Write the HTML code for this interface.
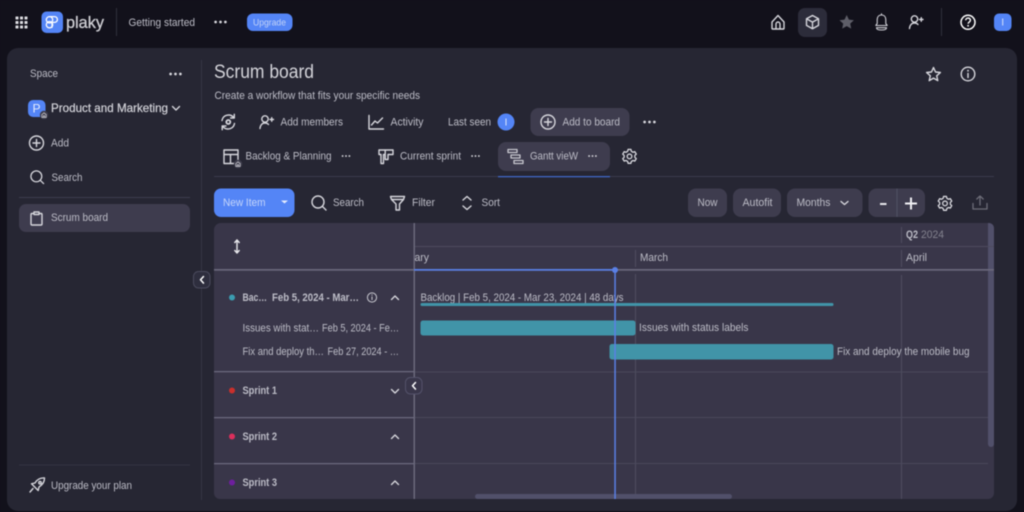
<!DOCTYPE html>
<html><head><meta charset="utf-8"><title>Scrum board</title>
<style>
html,body{margin:0;padding:0;background:#12111b;width:1024px;height:512px;overflow:hidden}
svg{display:block;filter:blur(.4px)}
text{font-family:"Liberation Sans",sans-serif;font-size:11px;fill:#bdbdc7}
.b{font-weight:bold;font-size:11px}
.i{fill:none;stroke:#d6d6dc;stroke-width:1.4;stroke-linecap:round;stroke-linejoin:round}
.g{fill:none;stroke:#c8c8d0;stroke-width:1.3;stroke-linecap:round;stroke-linejoin:round}
</style></head><body>
<svg width="1024" height="512" viewBox="0 0 1024 512" xmlns="http://www.w3.org/2000/svg">
<defs>
<symbol id="dots" viewBox="0 0 13 4" overflow="visible"><circle cx="1.6" cy="2" r="1.35" fill="#d8d8de"/><circle cx="6.5" cy="2" r="1.35" fill="#d8d8de"/><circle cx="11.4" cy="2" r="1.35" fill="#d8d8de"/></symbol>
<symbol id="gear" viewBox="0 0 16 16" overflow="visible"><path class="i" d="M6.5 1h3l.5 2 1.700 1 2-.6 1.500 2.600-1.500 1.400v2l1.500 1.400-1.500 2.600-2-.6-1.700 1-.5 2h-3l-.5-2-1.700-1-2 .6L.8 10.800 2.300 9.400v-2L.8 6l1.500-2.600 2 .6 1.700-1z"/><circle class="i" cx="8" cy="8.400" r="2.500"/></symbol>
<symbol id="mag" viewBox="0 0 16 16" overflow="visible"><circle class="i" cx="7" cy="7" r="6"/><path class="i" d="M11.500 11.500L15 15"/></symbol>
<symbol id="addu" viewBox="0 0 15 14" overflow="visible"><circle class="i" cx="6" cy="4" r="3.200"/><path class="i" d="M1 13.500c.3-3.500 2.300-5.500 5-5.500 1.500 0 2.700.5 3.500 1.500M11 4.500h3.500M12.750 2.750v3.500"/></symbol>
<symbol id="home" viewBox="0 0 8 8" overflow="visible"><circle cx="4" cy="4" r="4.200" fill="#3f3e4d"/><path d="M1.800 3.600L4 1.800l2.200 1.800v2.800H1.800zM3.300 6.400V4.700h1.400v1.700" fill="none" stroke="#d0d0d6" stroke-width=".7"/></symbol>
</defs>
<rect width="1024" height="512" fill="#12111b"/>

<!-- top bar -->
<g fill="#dcdce0">
<rect x="15.500" y="16.500" width="3" height="3" rx=".5"/><rect x="20" y="16.500" width="3" height="3" rx=".5"/><rect x="24.500" y="16.500" width="3" height="3" rx=".5"/>
<rect x="15.500" y="21" width="3" height="3" rx=".5"/><rect x="20" y="21" width="3" height="3" rx=".5"/><rect x="24.500" y="21" width="3" height="3" rx=".5"/>
<rect x="15.500" y="25.500" width="3" height="3" rx=".5"/><rect x="20" y="25.500" width="3" height="3" rx=".5"/><rect x="24.500" y="25.500" width="3" height="3" rx=".5"/>
</g>
<rect x="41.500" y="11.500" width="21.500" height="21.500" rx="5" fill="#5485f6"/>
<g fill="none" stroke="#fff" stroke-width="1.300" stroke-linecap="round">
<circle cx="49.500" cy="19.800" r="3.200"/><circle cx="49.500" cy="24.700" r="3.200"/><path d="M49.500 16.600h5a2.900 2.900 0 0 1 0 5.800h-2.500v5"/>
</g>
<text x="66" y="28" style="font-size:17px;fill:#cfcfd4" stroke="#cfcfd4" stroke-width=".3" textLength="38" lengthAdjust="spacingAndGlyphs">plaky</text>
<rect x="116" y="8" width="1" height="28" fill="#30303c"/>
<text x="128.500" y="26" textLength="66.500" lengthAdjust="spacingAndGlyphs">Getting started</text>
<use href="#dots" x="214" y="20" width="13" height="4"/>
<rect x="247" y="13.500" width="45.500" height="17.500" rx="6" fill="#5485f6"/>
<text x="253" y="25.500" style="font-size:9.500px;fill:#c4d4f8" textLength="33" lengthAdjust="spacingAndGlyphs">Upgrade</text>

<path class="i" d="M772 22l6-6.500 6 6.500v6.500a.5.500 0 0 1-.5.500h-11a.5.500 0 0 1-.5-.5zM776 29v-5a2 2 0 0 1 4 0v5"/>
<rect x="798" y="8" width="29" height="29" rx="7" fill="#2c2c3a"/>
<path class="i" d="M812.500 15.500l6 3.300v6.600l-6 3.300-6-3.300v-6.600zM806.500 18.800l6 3.300 6-3.300M812.500 22.100v6.600"/>
<path d="M846.700 15l2.200 4.600 5 .6-3.700 3.400 1 5-4.500-2.500-4.500 2.500 1-5-3.700-3.400 5-.6z" fill="#5e5e68"/>
<path d="M881.500 15c-2.800 0-4.300 2-4.300 4.500v4l-1.400 2h11.400l-1.400-2v-4c0-2.500-1.500-4.500-4.300-4.500zM881.500 15v-1.200M876.500 27.700h10c0 1.500-2 2.300-5 2.300s-5-.8-5-2.300z" fill="none" stroke="#cfcfd6" stroke-width="1.100" stroke-linecap="round" stroke-linejoin="round"/>
<use href="#addu" x="908.500" y="15" width="15" height="14"/>
<rect x="941" y="8" width="1" height="28" fill="#30303c"/>
<circle cx="968" cy="22.300" r="7" fill="none" stroke="#fff" stroke-width="1.500"/>
<path d="M965.700 20.300c0-3 4.700-3 4.700-.1 0 1.800-2.300 1.800-2.300 3.500" fill="none" stroke="#fff" stroke-width="1.400"/><circle cx="968.100" cy="25.800" r=".9" fill="#fff"/>
<rect x="994" y="13.500" width="17.500" height="17.500" rx="5" fill="#5485f6"/>
<rect x="1002.200" y="18.500" width="1" height="7" fill="#d8e2fb"/>

<!-- panel -->
<rect x="7" y="48" width="1010" height="463" rx="11" fill="#262633"/>
<rect x="201" y="60" width="1" height="440" fill="#363645"/>

<!-- sidebar -->
<text x="30" y="77" textLength="28" lengthAdjust="spacingAndGlyphs">Space</text>
<use href="#dots" x="169" y="72" width="13" height="4"/>
<rect x="28" y="100" width="17.500" height="17" rx="5" fill="#5485f6"/>
<text x="32.500" y="112.500" style="font-size:12px;fill:#e4ebfd">P</text>
<use href="#home" x="40" y="111" width="8" height="8"/>
<text x="51" y="112" style="font-size:12px;fill:#d4d4da" stroke="#d4d4da" stroke-width=".2" textLength="117" lengthAdjust="spacingAndGlyphs">Product and Marketing</text>
<path class="i" d="M172.500 106.500l3.500 3.500 3.500-3.500"/>
<circle class="i" cx="36.500" cy="143" r="7"/><path class="i" d="M36.500 139.500v7M33 143h7"/>
<text x="51" y="146.500" textLength="18" lengthAdjust="spacingAndGlyphs">Add</text>
<use href="#mag" x="30" y="170" width="14.500" height="14.500"/>
<text x="51.500" y="181" textLength="31" lengthAdjust="spacingAndGlyphs">Search</text>
<rect x="19" y="197" width="171" height="1" fill="#3d3d4e"/>
<rect x="19" y="204" width="171" height="28" rx="7" fill="#3e3c4e"/>
<path class="i" d="M33.500 213.500h-1.500a1 1 0 0 0-1 1v9.500a1 1 0 0 0 1 1h9a1 1 0 0 0 1-1v-9.500a1 1 0 0 0-1-1h-1.500M34 212h5v2.500h-5z"/>
<text x="51" y="221" textLength="57" lengthAdjust="spacingAndGlyphs">Scrum board</text>
<rect x="19" y="464.500" width="171" height="1" fill="#333342"/>
<path class="i" d="M44.500 478c-4.500-.3-7.500 1.700-9.500 5l-3.500.8 2 2 2.700 2.700 2 2 .8-3.500c3.300-2 5.500-5 5.500-9zM33 488.500l-3 3.500"/><circle class="i" cx="40" cy="482.700" r="1.200"/>
<text x="51" y="489" textLength="81" lengthAdjust="spacingAndGlyphs">Upgrade your plan</text>
<rect x="193.500" y="271.500" width="16.500" height="16.500" rx="5" fill="#2e2e3e" stroke="#4a4a5c"/>
<path d="M203.500 276.500l-3 3.300 3 3.300" fill="none" stroke="#fff" stroke-width="1.500" stroke-linecap="round" stroke-linejoin="round"/>

<!-- header -->
<text x="214" y="78" style="font-size:19px;fill:#d4d4da" textLength="100" lengthAdjust="spacingAndGlyphs">Scrum board</text>
<text x="214.500" y="99" textLength="205.500" lengthAdjust="spacingAndGlyphs">Create a workflow that fits your specific needs</text>
<path class="i" d="M933.500 67.500l2 4.500 4.900.5-3.700 3.300 1.100 4.800-4.300-2.500-4.300 2.500 1.100-4.800-3.700-3.300 4.900-.5z"/>
<circle class="i" cx="968" cy="74" r="6.800"/><path class="i" d="M968 73.500v4"/><circle cx="968" cy="70.700" r=".9" fill="#d6d6dc"/>

<!-- row 1 -->
<path class="i" d="M222 120.500a6.600 6.600 0 0 1 11.800-2.800M234.500 123.500a6.600 6.600 0 0 1-11.800 2.800M234.300 114.300v3.700h-3.700M222.200 129.700V126h3.700"/><circle cx="228.300" cy="122" r="2" fill="none" stroke="#d6d6dc" stroke-width="1.800"/>
<use href="#addu" x="259" y="115" width="15" height="14"/>
<text x="280.500" y="125.500" textLength="62.500" lengthAdjust="spacingAndGlyphs">Add members</text>
<path class="i" d="M369 115.500v13.500h14.500M371.500 125l3.500-4 2.500 2 5-5"/>
<text x="390.500" y="125.500" textLength="33" lengthAdjust="spacingAndGlyphs">Activity</text>
<text x="448" y="125.500" textLength="43" lengthAdjust="spacingAndGlyphs">Last seen</text>
<circle cx="506" cy="122" r="8.500" fill="#5485f6"/><rect x="505.500" y="118.500" width="1" height="7" fill="#dbe5fc"/>
<rect x="530.500" y="108" width="99" height="28" rx="8" fill="#3e3c4e"/>
<circle class="i" cx="548" cy="122" r="7"/><path class="i" d="M548 118.500v7M544.500 122h7"/>
<text x="562.500" y="125.500" textLength="57.500" lengthAdjust="spacingAndGlyphs">Add to board</text>
<use href="#dots" x="643" y="120" width="13" height="4"/>

<!-- row 2 -->
<path class="i" d="M224 150h14v13.500h-14zM224 154.500h14M230.500 154.500v9"/>
<use href="#home" x="234" y="160" width="8" height="8"/>
<text x="245.500" y="159.500" textLength="86" lengthAdjust="spacingAndGlyphs">Backlog &amp; Planning</text>
<use href="#dots" x="341.500" y="154.500" width="9" height="3"/>
<path class="i" d="M379 150h14v4.500h-5v5h-2.800v-5h-1.700v9h-2.500v-9H379zM385.200 150v4.500"/>
<text x="400" y="159.500" textLength="61" lengthAdjust="spacingAndGlyphs">Current sprint</text>
<use href="#dots" x="471" y="154.500" width="9" height="3"/>
<rect x="498" y="142" width="112" height="29" rx="8" fill="#3e3c4e"/>
<path class="g" d="M508 149.500h9v3h-9zM511 155h9v3h-9zM514 160.500h9v3h-9z"/>
<text x="530" y="159.500" textLength="48" lengthAdjust="spacingAndGlyphs">Gantt vieW</text>
<use href="#dots" x="588" y="154.500" width="9" height="3"/>
<use href="#gear" x="622" y="148.500" width="15" height="15"/>
<rect x="214" y="176" width="780" height="1" fill="#3a3a4c"/>
<rect x="498" y="176" width="112" height="1.300" fill="#3f66c4"/>

<!-- row 3 -->
<rect x="214" y="188.500" width="80.500" height="28.500" rx="7" fill="#5485f6"/>
<text x="223" y="206" style="fill:#c6d6fa" textLength="42.500" lengthAdjust="spacingAndGlyphs">New Item</text>
<path d="M281 200.500h7l-3.500 3z" fill="#e4ebfd"/>
<use href="#mag" x="311" y="195" width="16" height="16"/>
<text x="333" y="206" textLength="31" lengthAdjust="spacingAndGlyphs">Search</text>
<path class="i" d="M390.500 196.500h14l-1 3-4 4.500v6l-3.500 0v-6l-4.500-4.500zM391.500 199.500h12"/>
<text x="412" y="206" textLength="23" lengthAdjust="spacingAndGlyphs">Filter</text>
<path class="i" d="M463 200l4-3.500 4 3.500M463 206l4 3.500 4-3.500"/>
<text x="481.500" y="206" textLength="18.500" lengthAdjust="spacingAndGlyphs">Sort</text>

<rect x="688" y="188.500" width="39" height="28.500" rx="8" fill="#3e3c4e"/>
<text x="697.500" y="206" textLength="20" lengthAdjust="spacingAndGlyphs">Now</text>
<rect x="733" y="188.500" width="48" height="28.500" rx="8" fill="#3e3c4e"/>
<text x="742.500" y="206" textLength="30" lengthAdjust="spacingAndGlyphs">Autofit</text>
<rect x="787" y="188.500" width="75.500" height="28.500" rx="8" fill="#3e3c4e"/>
<text x="796.500" y="206" textLength="34" lengthAdjust="spacingAndGlyphs">Months</text>
<path class="i" d="M841 201.500l3.500 3 3.500-3"/>
<rect x="868.500" y="188.500" width="56.500" height="28.500" rx="8" fill="#3e3c4e"/>
<rect x="896.500" y="188.500" width="1" height="28.500" fill="#505062"/>
<rect x="880" y="203" width="6.500" height="2" fill="#e8e8ec"/>
<path d="M905 203.500h12M911 197.500v12" stroke="#f0f0f4" stroke-width="2" fill="none"/>
<use href="#gear" x="937.500" y="195.500" width="15" height="15"/>
<path d="M973 203.500v5.500h14v-5.500M980 205v-9M976.800 199l3.200-3 3.200 3" fill="none" stroke="#6d6d78" stroke-width="1.300" stroke-linecap="round" stroke-linejoin="round"/>

<!-- gantt -->
<path d="M221 223h768a5 5 0 0 1 5 5v265a6 6 0 0 1-6 6H220a6 6 0 0 1-6-6V230a7 7 0 0 1 7-7z" fill="#393649"/>
<path d="M988 223h1a5 5 0 0 1 5 5v216a3 3 0 0 1-6 0z" fill="#51506a"/>
<rect x="414" y="246" width="580" height="1" fill="#4d4b5e"/>
<rect x="635" y="250" width="1" height="17" fill="#4f4d60"/>
<rect x="635" y="274" width="1" height="225" fill="#4f4d60"/>
<rect x="901" y="227" width="1" height="16" fill="#4f4d60"/>
<rect x="901" y="250" width="1" height="17" fill="#4f4d60"/>
<rect x="901" y="275" width="1" height="224" fill="#4f4d60"/>
<rect x="414" y="371.500" width="574" height="1" fill="#4a485b"/>
<rect x="414" y="417" width="574" height="1" fill="#4a485b"/>
<rect x="414" y="463" width="574" height="1" fill="#4a485b"/>
<rect x="214" y="371" width="200" height="1.300" fill="#6a687b"/>
<rect x="214" y="417" width="200" height="1.300" fill="#6a687b"/>
<rect x="214" y="463" width="200" height="1.300" fill="#6a687b"/>
<rect x="214" y="269" width="780" height="1.700" fill="#6a687b"/>
<rect x="413.500" y="223" width="1.500" height="276" fill="#6a687b"/>
<rect x="414" y="269" width="201" height="1.700" fill="#5a80e6"/>

<text x="414.500" y="261" textLength="14.500" lengthAdjust="spacingAndGlyphs">ary</text>
<text x="640" y="261" textLength="28" lengthAdjust="spacingAndGlyphs">March</text>
<text x="906" y="261" textLength="21" lengthAdjust="spacingAndGlyphs">April</text>
<text x="906" y="238" class="b" textLength="12" lengthAdjust="spacingAndGlyphs">Q2</text>
<text x="921" y="238" style="fill:#84838f" textLength="23" lengthAdjust="spacingAndGlyphs">2024</text>
<path d="M237 240v13M234.800 242.500l2.200-2.500 2.200 2.500M234.800 250.500l2.200 2.500 2.200-2.500" fill="none" stroke="#e8e8ec" stroke-width="1.400" stroke-linecap="round" stroke-linejoin="round"/>

<circle cx="232" cy="297.500" r="3" fill="#3b9cb0"/>
<text x="242.500" y="301" class="b" textLength="24.500" lengthAdjust="spacingAndGlyphs">Bac…</text>
<text x="272" y="301" class="b" textLength="87" lengthAdjust="spacingAndGlyphs">Feb 5, 2024 - Mar…</text>
<circle class="g" cx="372" cy="297.500" r="4.600" style="stroke-width:1"/><path d="M372 296.500v3.500" stroke="#c8c8d0"/><circle cx="372" cy="295" r=".6" fill="#c8c8d0"/>
<path class="i" d="M391.500 299.500l3.500-3.500 3.500 3.500"/>
<text x="242.500" y="331.500" textLength="76.500" lengthAdjust="spacingAndGlyphs">Issues with stat…</text>
<text x="322" y="331.500" textLength="77" lengthAdjust="spacingAndGlyphs">Feb 5, 2024 - Fe…</text>
<text x="242.500" y="355" textLength="81.500" lengthAdjust="spacingAndGlyphs">Fix and deploy th…</text>
<text x="327.500" y="355" textLength="71.500" lengthAdjust="spacingAndGlyphs">Feb 27, 2024 - …</text>

<circle cx="232" cy="390.500" r="3" fill="#c9302c"/>
<text x="242.500" y="394" class="b" textLength="34.500" lengthAdjust="spacingAndGlyphs">Sprint 1</text>
<path class="i" d="M391.500 389.500l3.500 3.500 3.500-3.500"/>
<circle cx="232" cy="436.500" r="3" fill="#dc2f5c"/>
<text x="242.500" y="440" class="b" textLength="34.500" lengthAdjust="spacingAndGlyphs">Sprint 2</text>
<path class="i" d="M391.500 438.500l3.500-3.500 3.500 3.500"/>
<circle cx="232" cy="482.500" r="3" fill="#6e1f9e"/>
<text x="242.500" y="486" class="b" textLength="34.500" lengthAdjust="spacingAndGlyphs">Sprint 3</text>
<path class="i" d="M391.500 484.500l3.500-3.500 3.500 3.500"/>

<text x="420.500" y="301" textLength="203" lengthAdjust="spacingAndGlyphs">Backlog | Feb 5, 2024 - Mar 23, 2024 | 48 days</text>
<rect x="420.500" y="303" width="413" height="3" rx="1.500" fill="#4194a8"/>
<rect x="420.500" y="320.500" width="215" height="15" rx="2.500" fill="#4194a8"/>
<rect x="609.500" y="344" width="224" height="15.500" rx="2.500" fill="#4194a8"/>
<text x="639" y="331" textLength="109.500" lengthAdjust="spacingAndGlyphs">Issues with status labels</text>
<text x="837" y="355" textLength="132.500" lengthAdjust="spacingAndGlyphs">Fix and deploy the mobile bug</text>

<rect x="475" y="494" width="257" height="5" rx="2.500" fill="#51506a"/>
<rect x="614.300" y="270" width="1.500" height="229" fill="#5a80e6"/>
<circle cx="615" cy="270" r="3" fill="#5a80e6"/>
<rect x="405.500" y="377.500" width="16.500" height="16.500" rx="5" fill="#39364a" stroke="#54526a"/>
<path d="M415.500 382.500l-3 3.300 3 3.300" fill="none" stroke="#fff" stroke-width="1.500" stroke-linecap="round" stroke-linejoin="round"/>
</svg>
</body></html>
